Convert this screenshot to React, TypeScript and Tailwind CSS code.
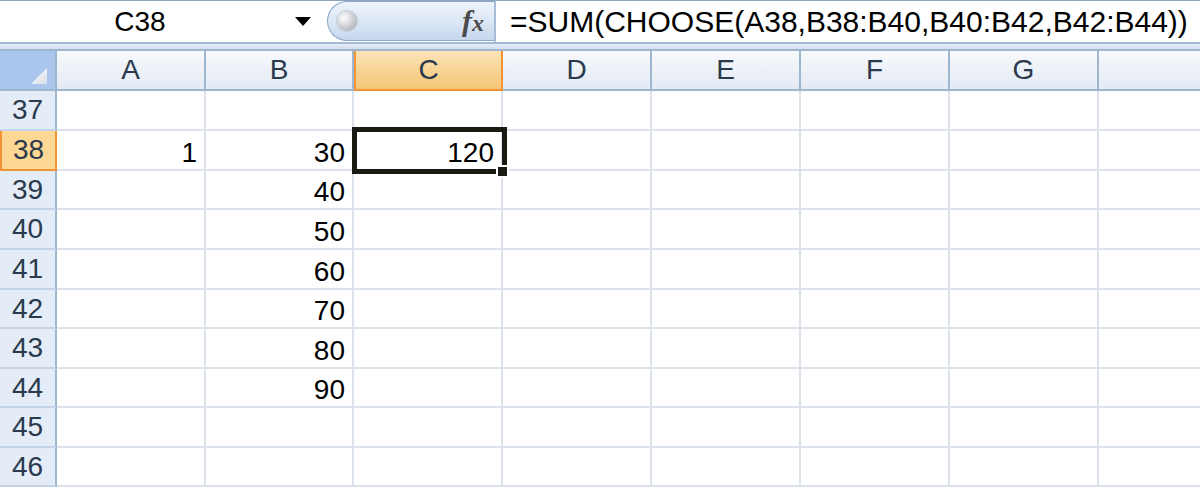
import React from 'react';

// Excel 2007 style sheet fragment: formula bar + grid around C38.
const COLS = [
  { label: 'A', w: 149 },
  { label: 'B', w: 148 },
  { label: 'C', w: 149 },
  { label: 'D', w: 149 },
  { label: 'E', w: 149 },
  { label: 'F', w: 149 },
  { label: 'G', w: 149 },
  { label: '', w: 120 },
];

const ROWS: { n: number; h: number; a?: string; b?: string; c?: string }[] = [
  { n: 37, h: 40 },
  { n: 38, h: 40, a: '1', b: '30', c: '120' },
  { n: 39, h: 39, b: '40' },
  { n: 40, h: 40, b: '50' },
  { n: 41, h: 40, b: '60' },
  { n: 42, h: 39, b: '70' },
  { n: 43, h: 40, b: '80' },
  { n: 44, h: 39, b: '90' },
  { n: 45, h: 40 },
  { n: 46, h: 39 },
];

function FormulaBar() {
  return (
    <div className="flex h-[42px] border-t border-[#8da3bf] bg-white">
      {/* Name box */}
      <div className="flex w-[327px] shrink-0 items-center">
        <div className="w-[280px] text-center text-[28px] leading-none text-black">C38</div>
        <svg width="16" height="9" viewBox="0 0 16 9" className="ml-[15px]">
          <path d="M0 0 H16 L8 9 Z" fill="#000" />
        </svg>
      </div>
      {/* fx pill */}
      <div className="relative flex h-[40px] w-[167px] shrink-0 items-center rounded-l-[20px] border border-r-0 border-[#8aa7cc] bg-gradient-to-b from-[#eef3fa] via-[#dce7f5] to-[#c6d7ed]">
        <div className="ml-[9px] h-[20px] w-[20px] rounded-full bg-[radial-gradient(circle_at_35%_35%,#ffffff,#b9bcc2_70%,#8d9097)] shadow-[0_0_0_1px_#c6cfdb]" />
        <span className="ml-auto mr-[10px] font-['Liberation_Serif',serif] text-[30px] font-bold italic leading-none text-[#4b4b4b]">
          f<span className="text-[24px]">x</span>
        </span>
      </div>
      <div className="w-[2px] shrink-0 bg-[#a7bcd6]" />
      <div className="flex flex-1 items-center whitespace-nowrap pl-[14px] text-[30px] leading-none text-black">
        =SUM(CHOOSE(A38,B38:B40,B40:B42,B42:B44))
      </div>
    </div>
  );
}

function HeaderRow() {
  return (
    <div className="flex h-[42px] border-t-2 border-[#9eb6ce]">
      <div className="relative w-[57px] shrink-0 border-r-2 border-b-2 border-[#9eb6ce] bg-[#aac6ec]">
        <svg width="16" height="16" viewBox="0 0 16 16" className="absolute right-[8px] bottom-[5px]">
          <defs>
            <linearGradient id="tri" x1="0" y1="0" x2="1" y2="1">
              <stop offset="0" stopColor="#ffffff" />
              <stop offset="1" stopColor="#d9dee6" />
            </linearGradient>
          </defs>
          <path d="M16 0 V16 H0 Z" fill="url(#tri)" />
        </svg>
      </div>
      {COLS.map((c) =>
        c.label === 'C' ? (
          <div
            key="C"
            style={{ width: c.w }}
            className="flex shrink-0 items-center justify-center border-x-2 border-b-2 border-[#f29436] bg-gradient-to-b from-[#fbe3b6] to-[#f4c673] text-[28px] leading-none text-[#2a3a4c]"
          >
            C
          </div>
        ) : (
          <div
            key={c.label || 'H'}
            style={{ width: c.w }}
            className="flex shrink-0 items-center justify-center border-r-2 border-b-2 border-[#9eb6ce] bg-gradient-to-b from-[#f7f9fc] to-[#e3eaf4] text-[28px] leading-none text-[#2a3a4c]"
          >
            {c.label}
          </div>
        )
      )}
    </div>
  );
}

function Cell({ w, value }: { w: number; value?: string }) {
  return (
    <div
      style={{ width: w }}
      className="flex shrink-0 items-end justify-end border-r-2 border-b-2 border-[#dbe2ec] pr-[7px] text-[28px] leading-[32px] text-black"
    >
      {value}
    </div>
  );
}

export default function App() {
  return (
    <div className="h-[488px] w-[1200px] overflow-hidden bg-white font-['Liberation_Sans',Arial,sans-serif]">
      <FormulaBar />
      <div className="h-[7px] border-t-2 border-[#a6bad3] bg-gradient-to-b from-[#e6edf7] to-[#d3dff0]" />
      <HeaderRow />
      <div className="relative">
        {ROWS.map((r) => (
          <div key={r.n} className="flex" style={{ height: r.h }}>
            {r.n === 38 ? (
              <div className="flex w-[57px] shrink-0 items-center justify-center border-2 border-t-0 border-[#f29436] bg-[#fdd794] text-[28px] leading-none text-[#2a3a4c]">
                38
              </div>
            ) : (
              <div className="flex w-[57px] shrink-0 items-center justify-center border-r-2 border-b-2 border-r-[#9eb6ce] border-b-[#c5d3e6] bg-[#e4ecf7] text-[28px] leading-none text-[#2a3a4c]">
                {r.n}
              </div>
            )}
            {COLS.map((c, i) => (
              <Cell key={i} w={c.w} value={i === 0 ? r.a : i === 1 ? r.b : i === 2 ? r.c : undefined} />
            ))}
          </div>
        ))}
        {/* active cell outline + fill handle */}
        <div className="pointer-events-none absolute left-[352px] top-[36px] h-[47px] w-[155px] border-[5px] border-[#1b1a12]" />
        <div className="pointer-events-none absolute left-[496px] top-[74px] h-[13px] w-[13px] border-2 border-white bg-[#1b1a12]" />
      </div>
    </div>
  );
}
